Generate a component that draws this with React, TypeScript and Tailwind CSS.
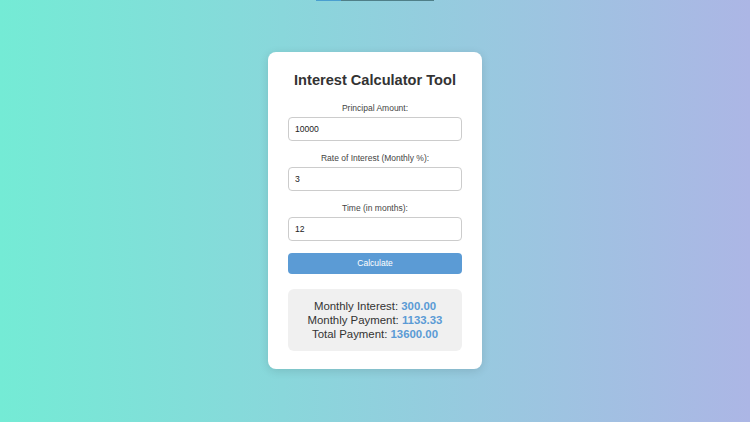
import { useState } from 'react';

const font = { fontFamily: '"Liberation Sans", Arial, sans-serif' };

function Field({ label, value, onChange }: { label: string; value: string; onChange: (v: string) => void }) {
    return (
        <div className="flex flex-col items-center">
            <label className="text-[8.5px] leading-[10px] text-[#444] mb-[4px]">{label}</label>
            <input
                type="number"
                value={value}
                onChange={(e) => onChange(e.target.value)}
                className="w-full h-[24px] px-[6px] text-[8.6px] text-[#222] bg-white border border-[#ccc] rounded-[4px] outline-none"
            />
        </div>
    );
}

export default function App() {
    const [principal, setPrincipal] = useState('10000');
    const [rate, setRate] = useState('3');
    const [months, setMonths] = useState('12');
    const [result, setResult] = useState({ interest: 300, payment: 1133.33, total: 13600 });

    const calculate = () => {
        const p = parseFloat(principal) || 0;
        const r = parseFloat(rate) || 0;
        const t = parseFloat(months) || 1;
        const interest = (p * r) / 100;
        const total = p + interest * t;
        setResult({ interest, payment: total / t, total });
    };

    return (
        <div
            className="relative min-h-[422px] w-full bg-[linear-gradient(to_right,#74ebd5,#acb6e5)] flex justify-center items-start pt-[52px]"
            style={font}
        >
            {/* thin bar at the very top */}
            <div className="absolute top-0 left-[316px] flex h-[1px]">
                <div className="w-[25px] bg-[#4a9fd0]" />
                <div className="w-[93px] bg-[#4f7f88]" />
            </div>

            <div className="w-[214px] bg-white rounded-[8px] shadow-[0_2px_10px_rgba(0,0,0,0.12)] px-[20px] pt-[19px] pb-[18px]">
                <h1 className="text-center text-[14.6px] leading-[18px] font-bold text-[#333] mb-[14px]">
                    Interest Calculator Tool
                </h1>

                <div className="flex flex-col gap-[12px]">
                    <Field label="Principal Amount:" value={principal} onChange={setPrincipal} />
                    <Field label="Rate of Interest (Monthly %):" value={rate} onChange={setRate} />
                    <Field label="Time (in months):" value={months} onChange={setMonths} />
                </div>

                <button
                    onClick={calculate}
                    className="mt-[12px] w-full h-[21px] rounded-[4px] bg-[#5b9bd5] text-white text-[8.5px]"
                >
                    Calculate
                </button>

                <div className="mt-[15px] bg-[#f0f0f0] rounded-[6px] h-[62px] flex flex-col items-center justify-center text-[11.4px] leading-[14px] text-[#333]">
                    <p>Monthly Interest: <span className="font-bold text-[#5b9bd5]">{result.interest.toFixed(2)}</span></p>
                    <p>Monthly Payment: <span className="font-bold text-[#5b9bd5]">{result.payment.toFixed(2)}</span></p>
                    <p>Total Payment: <span className="font-bold text-[#5b9bd5]">{result.total.toFixed(2)}</span></p>
                </div>
            </div>
        </div>
    );
}
